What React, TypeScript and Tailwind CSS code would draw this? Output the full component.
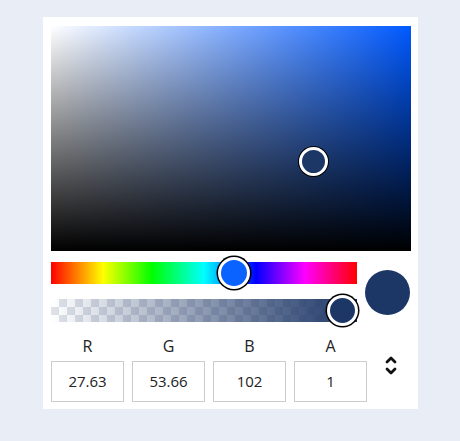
import React from "react";

const channels = [
  { label: "R", value: "27.63" },
  { label: "G", value: "53.66" },
  { label: "B", value: "102" },
  { label: "A", value: "1" },
];

export default function App() {
  return (
    <div className="min-h-[441px] w-[460px] bg-[#e9edf6] pl-[43px] pt-[17px] font-['Open_Sans','Noto_Sans',sans-serif]">
      <div className="w-[375px] bg-white px-2 pt-[9px] pb-[7px]">
        {/* saturation / value area */}
        <div className="relative h-[225px] w-[360px] bg-[#0059ff]">
          <div className="absolute inset-0 bg-[linear-gradient(to_right,#fff,rgba(255,255,255,0))]" />
          <div className="absolute inset-0 bg-[linear-gradient(to_top,#000,rgba(0,0,0,0))]" />
          <div className="absolute left-[248px] top-[121px] h-[29px] w-[29px] rounded-full border-[3px] border-white bg-[#1c3666] shadow-[0_0_0_1px_#000]" />
        </div>

        <div className="mt-[11px] flex items-center gap-2">
          <div className="flex w-[307px] flex-col gap-[15px]">
            {/* hue */}
            <div className="relative h-[22px] bg-[linear-gradient(to_right,#f00,#ff0_17%,#0f0_33%,#0ff_50%,#00f_67%,#f0f_83%,#f00)]">
              <div className="absolute left-[167px] top-[-5px] h-[32px] w-[32px] rounded-full border-[3px] border-white bg-[#0a63ff] shadow-[0_0_0_1.5px_#000]" />
            </div>
            {/* alpha */}
            <div className="relative h-[23px] bg-[conic-gradient(#dfe2e8_25%,#fff_0_50%,#dfe2e8_0_75%,#fff_0)] bg-[length:16px_16px]">
              <div className="absolute inset-0 bg-[linear-gradient(to_right,rgba(28,54,102,0),#1c3666)]" />
              <div className="absolute left-[276px] top-[-4px] h-[31px] w-[31px] rounded-full border-[3px] border-white bg-[#1c3666] shadow-[0_0_0_1.5px_#000]" />
            </div>
          </div>
          <div className="h-[45px] w-[45px] rounded-full bg-[#1c3666]" />
        </div>

        <div className="mt-[14px] flex items-start">
          <div className="flex gap-2">
            {channels.map((c) => (
              <div key={c.label} className="flex w-[73px] flex-col items-center">
                <span className="text-[16px] leading-[20px] text-[#222]">{c.label}</span>
                <div className="mt-[5px] flex h-[41px] w-full items-center justify-center border border-[#ccc] text-[15px] text-[#222]">
                  {c.value}
                </div>
              </div>
            ))}
          </div>
          <div className="flex flex-1 justify-center pt-[19px] pl-1">
            <svg width="12" height="21" viewBox="0 0 12 21" fill="none" stroke="#111" strokeWidth="2.8" strokeLinecap="round" strokeLinejoin="round">
              <path d="M2 7 L6 3 L10 7" />
              <path d="M2 14 L6 18 L10 14" />
            </svg>
          </div>
        </div>
      </div>
    </div>
  );
}
